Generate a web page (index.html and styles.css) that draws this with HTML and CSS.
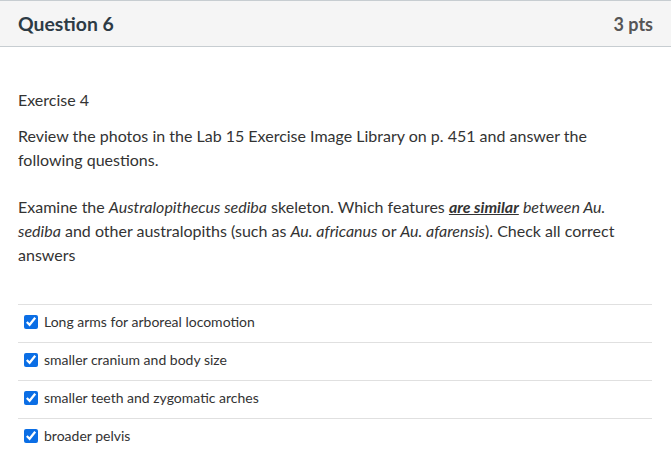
FILE: index.html
```html
<!DOCTYPE html>
<html lang="en">
<head>
  <meta charset="UTF-8">
  <title>Question 6</title>
  <link rel="stylesheet" href="styles.css">
</head>
<body>

  <div class="question">
    <!-- Kop van de vraag -->
    <div class="header">
      <span class="title">Question 6</span>
      <span class="points">3 pts</span>
    </div>

    <div class="text">
      <p>Exercise 4</p>
      <p>Review the photos in the Lab 15 Exercise Image Library on p. 451 and answer the following questions.</p>
      <p class="spacer"></p>
      <p>Examine the <em>Australopithecus sediba</em> skeleton. Which features <strong><em><u>are similar</u></em></strong> <em>between Au. sediba</em> and other australopiths (such as <em>Au. africanus</em> or <em>Au. afarensis</em>). Check all correct answers</p>
    </div>

    <!-- Antwoorden -->
    <div class="answers">
      <label class="answer"><input type="checkbox" checked> Long arms for arboreal locomotion</label>
      <label class="answer"><input type="checkbox" checked> smaller cranium and body size</label>
      <label class="answer"><input type="checkbox" checked> smaller teeth and zygomatic arches</label>
      <label class="answer"><input type="checkbox" checked> broader pelvis</label>
    </div>
  </div>

</body>
</html>
```

FILE: styles.css
```css
body {
  margin: 0;
  font-family: Lato, "Open Sans", sans-serif;
  color: #2d3b45;
  background: #fff;
}

.question {
  width: 671px;
}

.header {
  display: flex;
  justify-content: space-between;
  align-items: center;
  height: 45px;
  padding: 0 18px;
  background: #f5f5f5;
  border-top: 1px solid #c7cdd1;
  border-bottom: 1px solid #c7cdd1;
}

.title {
  font-size: 19.4px;
  font-weight: bold;
  color: #2d3b45;
}

.points {
  font-size: 18px;
  font-weight: bold;
  color: #565656;
}

.text {
  padding: 29px 40px 0 18px;
  font-size: 16px;
  line-height: 24px;
  color: #333;
}

.text p {
  margin: 12px 0;
}

/* lege regel tussen de alinea's */
.text p.spacer {
  margin: 0;
  height: 0;
  border-top: 1px solid transparent;
  margin-top: -2px;
}

.answers {
  margin: 37px 19px 0 18px;
}

.answer {
  display: flex;
  align-items: center;
  box-sizing: border-box;
  height: 38px;
  border-top: 1px solid #e0e0e0;
  padding: 0 0 4px 6px;
  font-size: 14px;
  color: #333;
}

.answer input {
  margin: 0 6px 0 0;
  width: 14px;
  height: 14px;
  accent-color: #0b6ee5;
}
```
